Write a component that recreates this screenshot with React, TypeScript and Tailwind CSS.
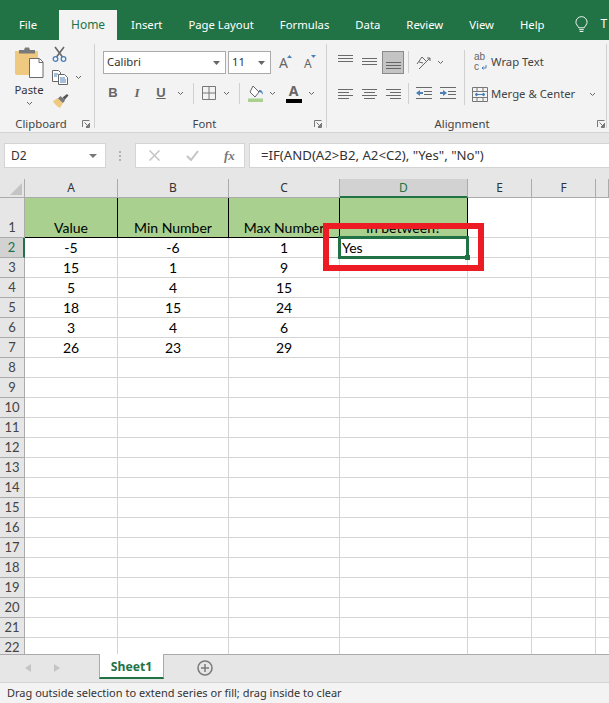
import React from 'react';

const tabs = ['File', 'Home', 'Insert', 'Page Layout', 'Formulas', 'Data', 'Review', 'View', 'Help'];

const rows: string[][] = [
  ['-5', '-6', '1'],
  ['15', '1', '9'],
  ['5', '4', '15'],
  ['18', '15', '24'],
  ['3', '4', '6'],
  ['26', '23', '29'],
];

const Chevron = ({ className = '' }: { className?: string }) => (
  <svg width="7" height="5" viewBox="0 0 7 5" className={`shrink-0 ${className}`}>
    <path d="M1 1l2.500 2.500L6 1" fill="none" stroke="#666" strokeWidth="1" />
  </svg>
);

const Launcher = () => (
  <svg width="8" height="8" viewBox="0 0 8 8" className="shrink-0">
    <path d="M.5 7V.5H7.500M7.500 3V7.500H4M2.500 2.500L6.500 6.500M6.500 4V6.500H4" fill="none" stroke="#777" strokeWidth="1" />
  </svg>
);

const Sep = ({ className = '' }: { className?: string }) => <div className={`w-px shrink-0 bg-[#d0d0d0] ${className}`} />;

// horizontal text lines for the alignment buttons
const Lines = ({ ys, className = '' }: { ys: [number, number, number][]; className?: string }) => (
  <svg width="15" height="15" viewBox="0 0 15 15" className={`shrink-0 ${className}`}>
    {ys.map(([y, a, b]) => (
      <path key={y} d={`M${a} ${y}.5H${b}`} stroke="#6a6a6a" strokeWidth="1" />
    ))}
  </svg>
);

const PasteIcon = () => (
  <svg width="30" height="31" viewBox="0 0 30 31">
    <path d="M1 4h23v24H3a2 2 0 0 1-2-2z" fill="#efc97f" />
    <path d="M5 3h5l1-2.500h4l1 2.500h5v3.500H5z" fill="#7a7a7a" />
    <path d="M15.500 11.500h10l3.500 3.500v15.500H15.500z" fill="#fff" stroke="#6a6a6a" />
    <path d="M25 11.500v4h4" fill="none" stroke="#6a6a6a" />
  </svg>
);

const CutIcon = () => (
  <svg width="15" height="16" viewBox="0 0 15 16">
    <path d="M3 1l7.500 10M12 1L4.500 11" stroke="#666" strokeWidth="1.600" fill="none" />
    <circle cx="3.500" cy="13" r="2.300" fill="none" stroke="#4a80b8" strokeWidth="1.300" />
    <circle cx="11.500" cy="13" r="2.300" fill="none" stroke="#4a80b8" strokeWidth="1.300" />
  </svg>
);

const CopyIcon = () => (
  <svg width="16" height="15" viewBox="0 0 16 15">
    <path d="M.5.500h6l2 2v9H.5z" fill="#fff" stroke="#666" />
    <path d="M6.500 4.500h6l3 3v7h-9z" fill="#fff" stroke="#666" />
    <path d="M2 4h4M2 6h3M8 8h5M8 10h6M8 12h6" stroke="#4a80b8" />
  </svg>
);

const PainterIcon = () => (
  <svg width="17" height="15" viewBox="0 0 17 15">
    <path d="M1 8l5-3 5 5-3 5C6 14 2 11 1 8z" fill="#efc97f" />
    <path d="M6 5.500l5 4.500 2-2.500-4.500-4.500z" fill="#777" />
    <path d="M10.500 4.500L15 1l1.500 1.500L12.500 7z" fill="#555" />
  </svg>
);

export default function App() {
  return (
    <div className="flex h-[703px] w-[609px] flex-col overflow-hidden bg-[#e6e6e6] font-['Noto_Sans',sans-serif] text-[#444]">
      {/* Tabs */}
      <div className="flex h-[40px] shrink-0 items-end overflow-hidden whitespace-nowrap bg-[#217346] pl-[6px] text-[12px] text-white">
        {tabs.map((t) => (
          <div
            key={t}
            className={
              t === 'Home'
                ? 'ml-[9px] mr-[1px] flex h-[30px] w-[58px] shrink-0 items-center justify-center bg-[#f3f3f3] text-[#217346]'
                : 'flex h-[30px] shrink-0 items-center px-[13px] text-[11.300px]'
            }
          >
            {t}
          </div>
        ))}
        <svg width="13" height="18" viewBox="0 0 14 18" className="mb-[6px] ml-[17px] shrink-0">
          <path d="M4 12C3 9.500 1 8.500 1 6a6 6 0 0 1 12 0c0 2.500-2 3.500-3 6zM4.500 14h5M5 16h4" fill="none" stroke="#fff" />
        </svg>
        <span className="mb-[7px] ml-[13px] shrink-0">T</span>
      </div>

      {/* Ribbon */}
      <div className="flex h-[93px] shrink-0 border-b border-[#d4d4d4] bg-[#f3f3f3] text-[11.300px]">
        {/* Clipboard */}
        <div className="flex w-[94px] flex-col pt-[4px]">
          <div className="flex h-[68px]">
            <div className="ml-[14px] flex w-[30px] flex-col items-center pt-[3px]">
              <PasteIcon />
              <span className="mt-[4px] leading-[16px] text-[#333]">Paste</span>
              <Chevron className="mt-[3px]" />
            </div>
            <div className="ml-[8px] flex flex-col gap-[8px] pt-[2px]">
              <CutIcon />
              <div className="flex items-center gap-[7px]">
                <CopyIcon />
                <Chevron />
              </div>
              <PainterIcon />
            </div>
          </div>
          <div className="mt-auto flex h-[16px] items-center pr-[4px]">
            <span className="flex-1 text-center">Clipboard</span>
            <Launcher />
          </div>
        </div>
        <Sep className="my-[4px] w-[1.500px] bg-[#c6c6c6]" />

        {/* Font */}
        <div className="flex w-[231px] flex-col pt-[11px]">
          <div className="flex items-center pl-[8px]">
            <div className="flex h-[23px] w-[123px] items-center justify-between border border-[#ababab] bg-white pl-[3px] pr-[5px] text-[#333]">
              Calibri
              <svg width="7" height="4" viewBox="0 0 7 4"><path d="M0 0h7L3.500 4z" fill="#666" /></svg>
            </div>
            <div className="ml-[2px] flex h-[23px] w-[43px] items-center justify-between border border-[#ababab] bg-white pl-[3px] pr-[5px] text-[#333]">
              11
              <svg width="7" height="4" viewBox="0 0 7 4"><path d="M0 0h7L3.500 4z" fill="#666" /></svg>
            </div>
            <div className="ml-[8px] flex w-[14px] items-start">
              <span className="text-[14px] leading-[18px] text-[#666]">A</span>
              <svg width="5" height="3" viewBox="0 0 5 3" className="ml-[-1px] mt-[1px] shrink-0"><path d="M0 3h5L2.500 0z" fill="#4a80b8" /></svg>
            </div>
            <div className="ml-[11px] flex w-[14px] items-start">
              <span className="mt-[2px] text-[12px] leading-[16px] text-[#666]">A</span>
              <svg width="5" height="3" viewBox="0 0 5 3" className="ml-[-1px] mt-[1px] shrink-0"><path d="M0 0h5L2.500 3z" fill="#4a80b8" /></svg>
            </div>
          </div>
          <div className="mt-[8px] flex h-[22px] items-center pl-[12px] text-[13px] text-[#666]">
            <span className="w-[12px] text-center font-['Liberation_Sans',sans-serif] font-bold">B</span>
            <span className="ml-[12px] w-[12px] text-center font-['Liberation_Serif',serif] font-bold italic">I</span>
            <span className="ml-[12px] w-[12px] text-center font-['Liberation_Sans',sans-serif] font-bold underline">U</span>
            <Chevron className="ml-[9.500px]" />
            <Sep className="ml-[9px] h-[21px]" />
            <svg width="14" height="14" viewBox="0 0 14 14" className="ml-[8px] shrink-0">
              <path d="M.5.500h13v13H.5zM7 .5v13M.5 7h13" fill="none" stroke="#777" />
            </svg>
            <Chevron className="ml-[7.500px]" />
            <Sep className="ml-[9px] h-[21px]" />
            <svg width="17" height="17" viewBox="0 0 17 17" className="ml-[6.500px] shrink-0">
              <path d="M6 1l6 6-4 5-5-5z" fill="#fff" stroke="#666" />
              <path d="M12 5c3 0 4 2 4 5-1-2-2-3-4-3z" fill="#4a80b8" />
              <path d="M1 13.500h15V17H1z" fill="#a9d08e" />
            </svg>
            <Chevron className="ml-[5.500px]" />
            <div className="ml-[9.500px] flex w-[16px] shrink-0 flex-col items-center">
              <span className="text-[14px] font-bold leading-[14px] text-[#666]">A</span>
              <div className="mt-[1px] h-[4px] w-[16px] bg-black" />
            </div>
            <Chevron className="ml-[6.500px]" />
          </div>
          <div className="mt-auto flex h-[16px] items-center pr-[4px]">
            <span className="flex-1 text-center">Font</span>
            <Launcher />
          </div>
        </div>
        <Sep className="my-[4px] w-[1.500px] bg-[#c6c6c6]" />

        {/* Alignment */}
        <div className="flex w-[279px] flex-col pt-[10px]">
          <div className="flex h-[66px]">
            <div className="flex w-[129px] shrink-0 flex-col pl-[11px]">
              <div className="flex h-[24px] items-center gap-[9px]">
                <Lines ys={[[0, 0, 15], [3, 0, 15], [6, 0, 15]]} />
                <Lines ys={[[3, 0, 15], [6, 0, 15], [9, 0, 15]]} />
                <div className="ml-[-4px] flex h-[23px] w-[22px] shrink-0 items-center justify-center border border-[#8a8a8a] bg-[#c4c4c4]">
                  <svg width="15" height="13" viewBox="0 0 15 13"><path d="M0 6.500h15M0 9.500h15M0 12.500h15" stroke="#666" /></svg>
                </div>
                <Sep className="ml-[-5px] h-[22px]" />
                <svg width="16" height="16" viewBox="0 0 16 16" className="ml-[-2px] shrink-0">
                  <path d="M1 10L6 3l5 5M3 8l4 1M3 15L14 4M11 4h3v3" fill="none" stroke="#666" />
                </svg>
                <Chevron className="ml-[-4px]" />
              </div>
              <div className="mt-[8px] flex h-[22px] items-center gap-[9px]">
                <Lines ys={[[3, 0, 15], [6, 0, 11], [9, 0, 15], [12, 0, 11]]} />
                <Lines ys={[[3, 0, 15], [6, 2, 13], [9, 0, 15], [12, 2, 13]]} />
                <Lines ys={[[3, 0, 15], [6, 4, 15], [9, 0, 15], [12, 4, 15]]} />
                <Sep className="ml-[-2px] h-[21px]" />
                <svg width="16" height="14" viewBox="0 0 16 14" className="ml-[-2px] shrink-0">
                  <path d="M0 1.500h16M8 5.500h8M8 8.500h8M0 12.500h16" stroke="#6a6a6a" />
                  <path d="M0 7l4-3v2h3v2H4v2z" fill="#4a80b8" />
                </svg>
                <svg width="16" height="14" viewBox="0 0 16 14" className="ml-[-1px] shrink-0">
                  <path d="M0 1.500h16M8 5.500h8M8 8.500h8M0 12.500h16" stroke="#6a6a6a" />
                  <path d="M7 7L3 4v2H0v2h3v2z" fill="#4a80b8" />
                </svg>
              </div>
            </div>
            <Sep className="ml-[8px] h-[55px]" />
            <div className="flex flex-col pl-[7px]">
              <div className="flex h-[24px] items-center">
                <span className="ml-[2px] flex w-[14px] flex-col font-['Liberation_Sans',sans-serif] text-[10px] leading-[10px] text-[#666]">
                  <span>ab</span>
                  <span className="flex items-center">
                    c
                    <svg width="6" height="5" viewBox="0 0 6 5" className="ml-[2px]"><path d="M5 0v3H1M2.500 1.500L1 3l1.500 1.500" fill="none" stroke="#4a80b8" /></svg>
                  </span>
                </span>
                <span className="ml-[3px]">Wrap Text</span>
              </div>
              <div className="mt-[8px] flex h-[24px] items-center">
                <svg width="16" height="15" viewBox="0 0 16 15" className="shrink-0">
                  <path d="M.5.500h15v14H.5zM.5 4.500h15M.5 10.500h15M5 .5v4M11 .5v4M5 10.500v4M11 10.500v4" fill="none" stroke="#777" />
                  <path d="M3 7.500h10M3 7.500l2-1.500v3zM13 7.500l-2-1.500v3z" fill="#4a80b8" stroke="#4a80b8" />
                </svg>
                <span className="ml-[3px]">Merge &amp; Center</span>
                <Chevron className="ml-[14px]" />
              </div>
            </div>
          </div>
          <div className="mt-auto flex h-[16px] items-center pr-[1px]">
            <span className="flex-1 text-center">Alignment</span>
            <Launcher />
          </div>
        </div>
        <Sep className="my-[4px] w-[1.500px] bg-[#c6c6c6]" />
      </div>

      {/* Formula bar */}
      <div className="flex h-[46px] shrink-0 items-start pl-[4px] pt-[10px]">
        <div className="flex h-[25px] w-[102px] items-center justify-between border border-[#d4d4d4] bg-white pl-[6px] pr-[8px] text-[12px] text-[#333]">
          D2
          <svg width="8" height="4" viewBox="0 0 8 4"><path d="M0 0h8L4 4z" fill="#777" /></svg>
        </div>
        <div className="ml-[13px] flex h-[25px] flex-col justify-center gap-[2px]">
          <div className="h-[2px] w-[2px] bg-[#b0b0b0]" />
          <div className="h-[2px] w-[2px] bg-[#b0b0b0]" />
          <div className="h-[2px] w-[2px] bg-[#b0b0b0]" />
        </div>
        <div className="ml-[14px] flex h-[25px] w-[110px] items-center border border-[#d4d4d4] bg-white pl-[13px]">
          <svg width="11" height="11" viewBox="0 0 11 11"><path d="M.5.500l10 10M10.500.5l-10 10" stroke="#c4c4c4" strokeWidth="1.500" /></svg>
          <svg width="13" height="11" viewBox="0 0 13 11" className="ml-[26px]"><path d="M1 6l4 4 7-9" fill="none" stroke="#c4c4c4" strokeWidth="2" /></svg>
          <span className="ml-[25px] font-['Liberation_Serif',serif] text-[13px] font-bold italic text-[#777]">fx</span>
        </div>
        <div className="ml-[4px] flex h-[25px] flex-1 items-center border-y border-l border-[#d4d4d4] bg-white pl-[11px] text-[13.200px] text-[#333]">
          =IF(AND(A2&gt;B2, A2&lt;C2), "Yes", "No")
        </div>
      </div>

      {/* Sheet */}
      <div className="relative min-h-0 flex-1 overflow-hidden bg-white font-['Lato',sans-serif] text-[14px] text-black">
        <div className="grid grid-cols-[25px_93px_111px_111px_128px_64px_64px_13px] grid-rows-[19px_40px_repeat(21,20px)]">
          {/* column headers */}
          <div className="flex items-end justify-end border-b border-r border-[#ababab] bg-[#e6e6e6] p-[2px]">
            <svg width="12" height="12" viewBox="0 0 12 12"><path d="M12 0v12H0z" fill="#c4c4c4" /></svg>
          </div>
          {['A', 'B', 'C', 'D', 'E', 'F', ''].map((c) => (
            <div
              key={c}
              className={
                c === 'D'
                  ? "flex items-center justify-center border-b-2 border-r border-b-[#217346] border-r-[#ababab] bg-[#d2d2d2] font-['Noto_Sans',sans-serif] text-[12px] text-[#217346]"
                  : "flex items-center justify-center border-b border-r border-[#ababab] bg-[#e6e6e6] font-['Noto_Sans',sans-serif] text-[12px] text-[#333]"
              }
            >
              {c}
            </div>
          ))}

          {/* row 1 */}
          <div className="flex items-end justify-center border-b border-r border-[#ababab] bg-[#e6e6e6] text-[13px] text-[#444]">1</div>
          {['Value', 'Min Number', 'Max Number', 'In between?'].map((h) => (
            <div key={h} className="flex items-end justify-center overflow-hidden whitespace-nowrap border-b border-r border-black bg-[#a9d08e] leading-[18px]">
              {h}
            </div>
          ))}
          <div className="border-b border-r border-[#d4d4d4]" />
          <div className="border-b border-r border-[#d4d4d4]" />
          <div className="border-b border-[#d4d4d4]" />

          {/* rows 2-22 */}
          {Array.from({ length: 21 }, (_, i) => {
            const vals = rows[i] ?? ['', '', ''];
            const active = i === 0;
            return (
              <React.Fragment key={i}>
                <div
                  className={
                    active
                      ? 'flex items-center justify-center border-b border-r-2 border-b-[#ababab] border-r-[#217346] bg-[#d2d2d2] text-[13px] text-[#217346]'
                      : 'flex items-center justify-center border-b border-r border-[#ababab] bg-[#e6e6e6] text-[13px] text-[#444]'
                  }
                >
                  {i + 2}
                </div>
                {vals.map((v, j) => (
                  <div key={j} className="flex items-center justify-center border-b border-r border-[#d4d4d4]">
                    {v}
                  </div>
                ))}
                <div className="flex items-center border-b border-r border-[#d4d4d4] pl-[2px]">{active ? 'Yes' : ''}</div>
                <div className="border-b border-r border-[#d4d4d4]" />
                <div className="border-b border-r border-[#d4d4d4]" />
                <div className="border-b border-[#d4d4d4]" />
              </React.Fragment>
            );
          })}
        </div>

        {/* selection and annotation */}
        <div className="absolute left-[338px] top-[57px] h-[23px] w-[131px] border-[3px] border-[#217346]" />
        <div className="absolute left-[465px] top-[76px] h-[5px] w-[5px] bg-[#217346]" />
        <div className="absolute left-[323px] top-[44px] h-[48px] w-[161px] border-[6px] border-[#ed1c24]" />
      </div>

      {/* Sheet tabs */}
      <div className="flex h-[28px] shrink-0 items-start border-t border-[#ababab] bg-[#e6e6e6]">
        <svg width="6" height="8" viewBox="0 0 6 8" className="ml-[25px] mt-[9px]"><path d="M6 0v8L0 4z" fill="#c4c4c4" /></svg>
        <svg width="6" height="8" viewBox="0 0 6 8" className="ml-[23px] mt-[9px]"><path d="M0 0v8l6-4z" fill="#c4c4c4" /></svg>
        <div className="ml-[39px] mt-[-1px] flex h-[25px] w-[65px] items-center justify-center border-x border-b-2 border-x-[#ababab] border-b-[#217346] bg-white pt-[4px] text-[12.200px] font-bold text-[#217346]">
          Sheet1
        </div>
        <svg width="16" height="16" viewBox="0 0 16 16" className="ml-[33px] mt-[5px]">
          <circle cx="8" cy="8" r="7" fill="none" stroke="#7a7a7a" strokeWidth="1.500" />
          <path d="M8 4v8M4 8h8" stroke="#7a7a7a" strokeWidth="1.500" />
        </svg>
      </div>

      {/* Status bar */}
      <div className="flex h-[21px] shrink-0 items-center border-t border-[#d4d4d4] bg-[#f3f3f3] pl-[7px] text-[11px] text-[#333]">
        Drag outside selection to extend series or fill; drag inside to clear
      </div>
    </div>
  );
}
